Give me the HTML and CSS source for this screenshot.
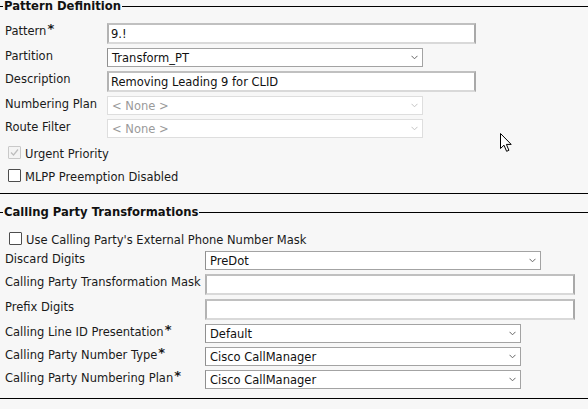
FILE: index.html
```html
<!DOCTYPE html>
<html lang="en">
<head>
<meta charset="utf-8">
<title>Translation Pattern</title>
<link rel="stylesheet" href="styles.css">
</head>
<body>
<div class="page">
  <section class="group g1">
    <div class="group-head"><span class="group-title">Pattern Definition</span></div>
    <div class="form f1">
      <label class="lbl">Pattern<span class="req">*</span></label>
      <input class="text w369" type="text" value="9.!">

      <label class="lbl">Partition</label>
      <div class="select w316"><span>Transform_PT</span><svg class="chev" width="7" height="5" viewBox="0 0 7 5"><path d="M0.5 0.8 L3.5 3.8 L6.5 0.8"/></svg></div>

      <label class="lbl">Description</label>
      <input class="text w369" type="text" value="Removing Leading 9 for CLID">

      <label class="lbl">Numbering Plan</label>
      <div class="select w316 disabled"><span>&lt; None &gt;</span><svg class="chev" width="7" height="5" viewBox="0 0 7 5"><path d="M0.5 0.8 L3.5 3.8 L6.5 0.8"/></svg></div>

      <label class="lbl">Route Filter</label>
      <div class="select w316 disabled"><span>&lt; None &gt;</span><svg class="chev" width="7" height="5" viewBox="0 0 7 5"><path d="M0.5 0.8 L3.5 3.8 L6.5 0.8"/></svg></div>
    </div>
    <div class="checks c1">
      <div class="check disabled"><span class="box"><svg width="11" height="11" viewBox="0 0 11 11"><path d="M2 5.5 L4.5 8 L9 2.5"/></svg></span><span class="check-text">Urgent Priority</span></div>
      <div class="check"><span class="box"></span><span class="check-text">MLPP Preemption Disabled</span></div>
    </div>
  </section>

  <section class="group g2">
    <div class="group-head"><span class="group-title">Calling Party Transformations</span></div>
    <div class="checks c2">
      <div class="check"><span class="box"></span><span class="check-text">Use Calling Party's External Phone Number Mask</span></div>
    </div>
    <div class="form f2">
      <label class="lbl">Discard Digits</label>
      <div class="select w336"><span>PreDot</span><svg class="chev" width="7" height="5" viewBox="0 0 7 5"><path d="M0.5 0.8 L3.5 3.8 L6.5 0.8"/></svg></div>

      <label class="lbl">Calling Party Transformation Mask</label>
      <input class="text w370" type="text" value="">

      <label class="lbl">Prefix Digits</label>
      <input class="text w370" type="text" value="">

      <label class="lbl">Calling Line ID Presentation<span class="req">*</span></label>
      <div class="select w316"><span>Default</span><svg class="chev" width="7" height="5" viewBox="0 0 7 5"><path d="M0.5 0.8 L3.5 3.8 L6.5 0.8"/></svg></div>

      <label class="lbl">Calling Party Number Type<span class="req">*</span></label>
      <div class="select w316"><span>Cisco CallManager</span><svg class="chev" width="7" height="5" viewBox="0 0 7 5"><path d="M0.5 0.8 L3.5 3.8 L6.5 0.8"/></svg></div>

      <label class="lbl">Calling Party Numbering Plan<span class="req">*</span></label>
      <div class="select w316"><span>Cisco CallManager</span><svg class="chev" width="7" height="5" viewBox="0 0 7 5"><path d="M0.5 0.8 L3.5 3.8 L6.5 0.8"/></svg></div>
    </div>
  </section>

  <svg class="cursor" width="13" height="21" viewBox="0 0 13 21"><path d="M0.5 0.5 L0.5 15.5 L4 12.2 L6.6 18.3 L8.9 17.3 L6.4 11.4 L11.2 11.4 Z"/></svg>
</div>
</body>
</html>
```

FILE: styles.css
```css
body {
  margin: 0;
  background: #f7f7f7;
  font-family: "DejaVu Sans", "Liberation Sans", sans-serif;
  font-size: 11.5px;
  color: #1a1a1a;
}

.page {
  position: relative;
  width: 588px;
  height: 409px;
  overflow: hidden;
}

.group-head {
  display: flex;
  align-items: center;
  height: 13px;
}

.group-head::before {
  content: "";
  width: 3px;
  height: 1px;
  background: #000;
}

.group-head::after {
  content: "";
  flex: 1;
  height: 1px;
  background: #000;
}

.group-title {
  font-weight: bold;
  font-size: 11.6px;
  line-height: 13px;
  padding: 0 1px;
  color: #111;
  white-space: nowrap;
}

.g1 {
  border-bottom: 1px solid #000;
  padding-bottom: 10px;
}

.g2 {
  margin-top: 12px;
  border-bottom: 1px solid #000;
  padding-bottom: 9px;
}

.form {
  display: grid;
  row-gap: 4px;
  align-items: start;
  padding-left: 5px;
}

.f1 {
  grid-template-columns: 102px 1fr;
  margin-top: 10px;
}

.f2 {
  grid-template-columns: 200px 1fr;
  margin-top: 5px;
}

.lbl {
  line-height: 15px;
  padding-top: 1px;
  white-space: nowrap;
}

.req {
  font-size: 13px;
  line-height: 10px;
  vertical-align: top;
  margin-left: 1px;
  font-weight: bold;
  color: #1a1a1a;
}

.text {
  box-sizing: border-box;
  height: 21px;
  margin: 0;
  padding: 0 2px;
  border-style: solid;
  border-width: 2px;
  border-color: #c0c0c0 #a9a9a9 #d9d9d9 #b3b3b3;
  background: #fff;
  font: inherit;
  color: #111;
  outline: none;
}

.select {
  box-sizing: border-box;
  height: 19px;
  display: flex;
  align-items: center;
  justify-content: space-between;
  padding: 0 4px;
  border: 1px solid #a3a3a3;
  border-left-color: #8f8f8f;
  background: #fff;
  color: #111;
  white-space: nowrap;
}

.chev path {
  fill: none;
  stroke: #666;
  stroke-width: 1;
}

.select.disabled {
  border-color: #dedede;
  color: #9a9a9a;
}

.select.disabled .chev path {
  stroke: #c4c4c4;
}

.w316 { width: 316px; }
.w336 { width: 336px; }
.w369 { width: 369px; }
.w370 { width: 370px; }

.checks {
  display: flex;
  flex-direction: column;
  row-gap: 8px;
}

.c1 {
  margin-top: 7px;
  padding-left: 8px;
}

.c2 {
  margin-top: 12px;
  padding-left: 9px;
}

.check {
  display: flex;
  align-items: flex-start;
  height: 15px;
  white-space: nowrap;
}

.check-text {
  line-height: 15px;
  margin-top: 2px;
}

.box {
  box-sizing: border-box;
  flex: none;
  width: 13px;
  height: 13px;
  margin-top: 1px;
  margin-right: 4px;
  border: 1px solid #4d4d4d;
  border-radius: 1px;
  background: #fff;
  display: flex;
  align-items: center;
  justify-content: center;
}

.check.disabled .box {
  border-color: #c9c9c9;
  background: #f4f4f4;
}

.box path {
  fill: none;
  stroke: #bdbdbd;
  stroke-width: 1.2;
}

.cursor {
  position: absolute;
  left: 500px;
  top: 133px;
}

.cursor path {
  fill: #fff;
  stroke: #000;
  stroke-width: 1;
  stroke-linejoin: miter;
}
```
